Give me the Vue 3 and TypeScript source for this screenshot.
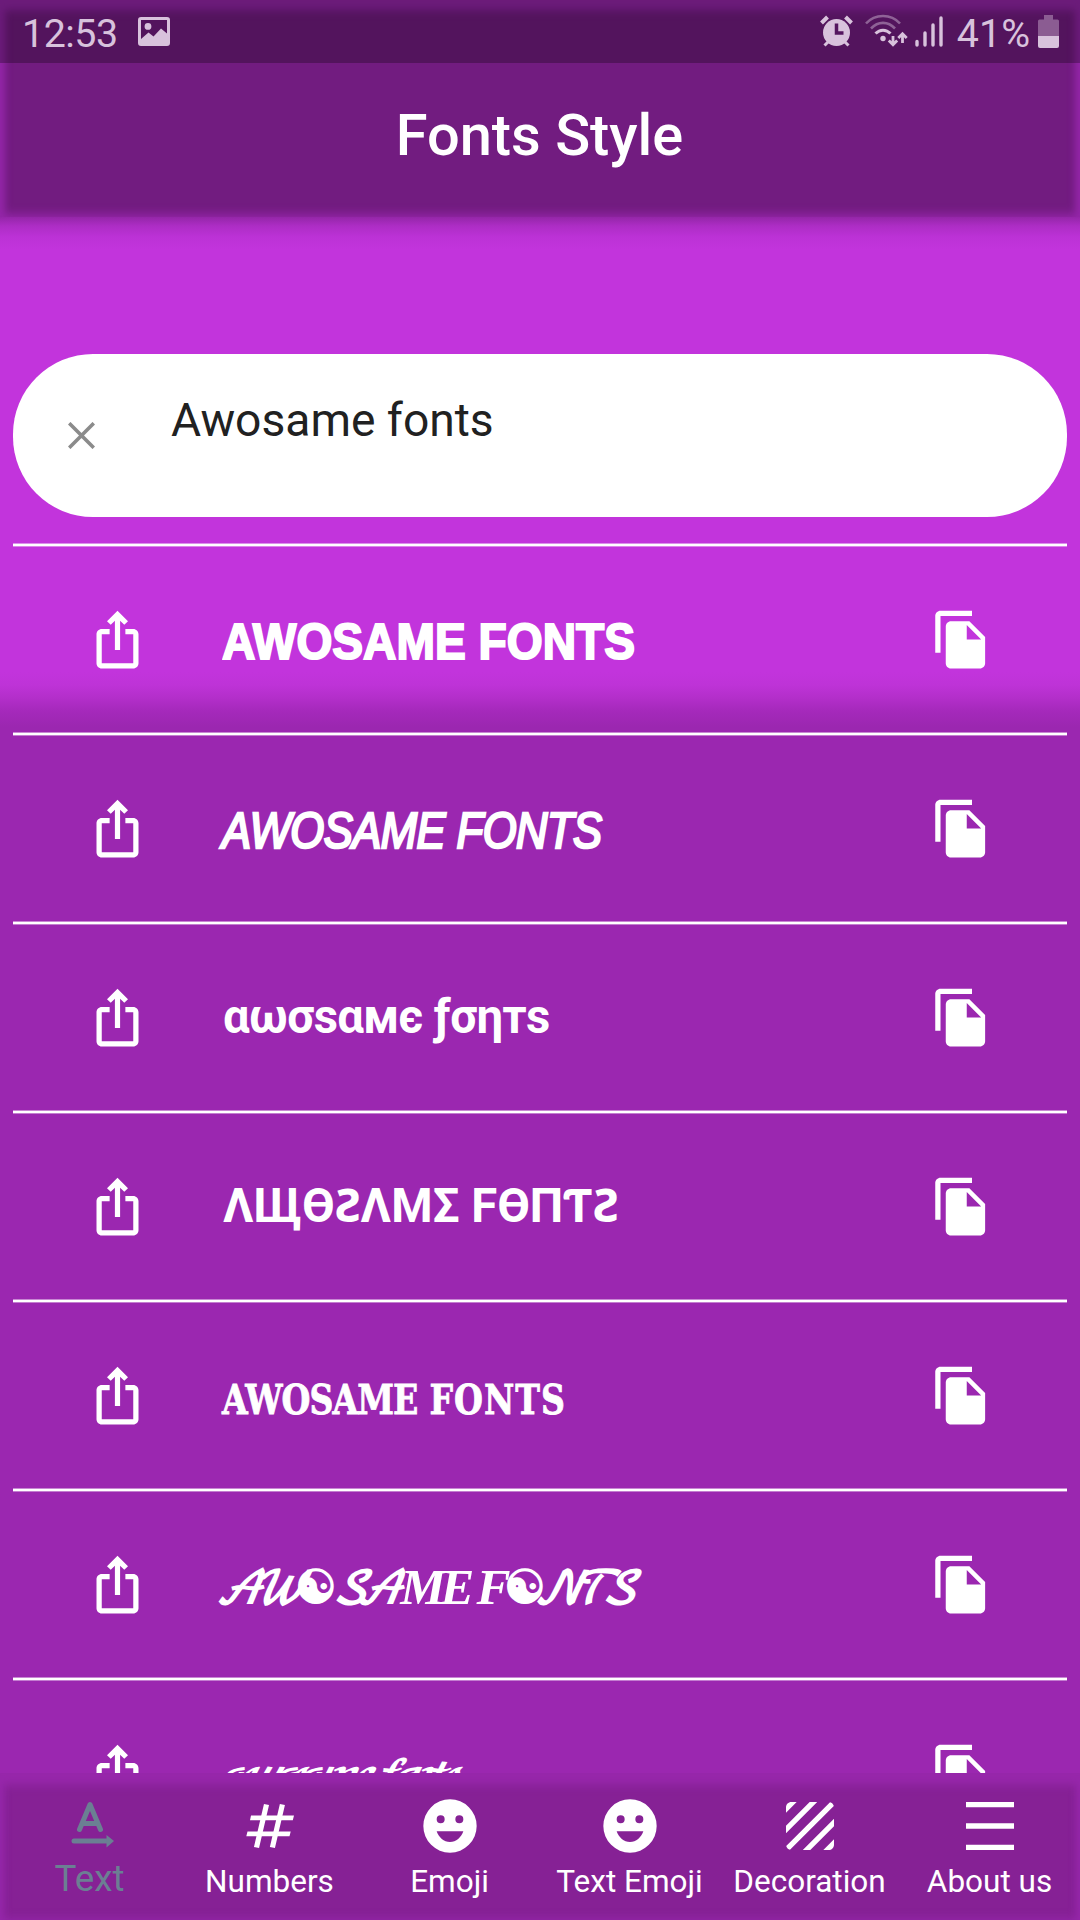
<script setup lang="ts">
interface Part {
  text: string
  kind: string
}
interface Row {
  kind: string
  parts: Part[]
}
interface Tab {
  label: string
  icon: string
}

const plain = (kind: string, text: string): Row => ({ kind, parts: [{ text, kind: 'plain' }] })

const rows: Row[] = [
  plain('sans', 'AWOSAME FONTS'),
  plain('slant', 'AWOSAME FONTS'),
  plain('greek', 'αωσѕαмє ƒσηтѕ'),
  plain('cyrillic', 'ΛЩӨƧΛMΣ FӨПƬƧ'),
  {
    kind: 'typewriter',
    parts: [
      { text: 'AWOSAME ', kind: 'tight' },
      { text: 'FONTS', kind: 'loose' },
    ],
  },
  {
    kind: 'script',
    parts: [
      { text: '𝒜𝒲', kind: 'hand' },
      { text: '☯', kind: 'yin' },
      { text: '𝒮𝒜', kind: 'hand' },
      { text: 'ME F', kind: 'roman' },
      { text: '☯', kind: 'yin' },
      { text: '𝒩𝒯𝒮', kind: 'hand tail' },
    ],
  },
  plain('lower', '𝓪𝔀𝓸𝓼𝓪𝓶𝓮 𝓯𝓸𝓷𝓽𝓼'),
]

const tabs: Tab[] = [
  { label: 'Text', icon: 'text' },
  { label: 'Numbers', icon: 'hash' },
  { label: 'Emoji', icon: 'emoji' },
  { label: 'Text Emoji', icon: 'emoji' },
  { label: 'Decoration', icon: 'texture' },
  { label: 'About us', icon: 'menu' },
]
</script>

<template>
  <div class="screen">
    <header class="top">
      <div class="status">
        <span class="clock">12:53</span>
        <svg class="picture" width="32" height="29" viewBox="0 0 32 29">
          <path fill-rule="evenodd" d="M3 0h26a3 3 0 0 1 3 3v23a3 3 0 0 1-3 3H3a3 3 0 0 1-3-3V3a3 3 0 0 1 3-3zM3 3v19l7.500-6.500 5 4 7.500-8 6 5V3zM10 6a3.400 3.400 0 1 1 0 6.800 3.400 3.400 0 0 1 0-6.800z" />
        </svg>
        <span class="grow"></span>
        <svg class="alarm" width="33" height="32" viewBox="0 0 33 32">
          <circle cx="16.500" cy="17.500" r="13.500" />
          <path d="M1.500 8l6-6M31.500 8l-6-6" stroke="currentColor" stroke-width="4" />
          <path d="M4.500 30.500l5-5M28.500 30.500l-5-5" stroke="currentColor" stroke-width="3" />
          <path class="hands" d="M16.500 8.500v9.500h7" />
        </svg>
        <svg class="wifi" width="43" height="33" viewBox="0 0 43 33">
          <g fill="none" stroke="currentColor" stroke-width="2.600">
            <path opacity=".45" d="M1 9.500C10-.5 26-.5 35 9.500" />
            <path opacity=".45" d="M6 14.500c7-7.500 17-7.500 24 0" />
            <path stroke-width="3" d="M10.500 19.500c4.500-4.500 10.500-4.500 15 0" />
            <path stroke-width="2.800" d="M28 22v8M23.800 26.500l4.200 4.200 4.200-4.200M37.500 29v-8M33.300 24l4.200-4.200 4.200 4.200" />
          </g>
          <circle cx="18" cy="24.500" r="2.700" />
        </svg>
        <svg class="signal" width="28" height="31" viewBox="0 0 28 31">
          <path stroke="currentColor" stroke-width="3.400" stroke-linecap="round" d="M2 25.500v3.500M10 17v12M18 9v20M26 2v27" />
        </svg>
        <span class="percent">41%</span>
        <svg class="battery" width="21" height="33" viewBox="0 0 21 33">
          <path opacity=".42" d="M6 0h9v4.500h4.500A1.500 1.500 0 0 1 21 6v15H0V6a1.500 1.500 0 0 1 1.500-1.500H6z" />
          <path d="M0 21h21v10a2 2 0 0 1-2 2H2a2 2 0 0 1-2-2z" />
        </svg>
      </div>
      <h1>Fonts Style</h1>
    </header>

    <main>
      <div class="search">
        <svg width="27" height="27" viewBox="0 0 27 27">
          <path d="M1.200 1.200l24.600 24.600M25.800 1.200L1.200 25.800" stroke="#8b8b8b" stroke-width="3.600" />
        </svg>
        <span>Awosame fonts</span>
      </div>
      <ul>
        <li v-for="(row, i) in rows" :key="i">
          <svg class="share" width="63" height="63" viewBox="0 0 24 24">
            <path d="M16 5l-1.420 1.420-1.590-1.590V16h-1.980V4.830L9.420 6.420 8 5l4-4 4 4zm4 5v11c0 1.100-.9 2-2 2H6c-1.110 0-2-.9-2-2V10c0-1.110.89-2 2-2h3v2H6v11h12V10h-3V8h3c1.100 0 2 .89 2 2z" />
          </svg>
          <div class="sample" :class="row.kind">
            <span v-for="(part, j) in row.parts" :key="j" :class="part.kind">{{ part.text }}</span>
          </div>
          <svg class="copy" width="63" height="63" viewBox="0 0 24 24">
            <path d="M16 1H4c-1.100 0-2 .9-2 2v14h2V3h12V1zm-1 4l6 6v10c0 1.100-.9 2-2 2H7.990C6.890 23 6 22.100 6 21l.01-14c0-1.100.89-2 1.990-2h7zm-1 7h5.500L14 6.500V12z" />
          </svg>
        </li>
      </ul>
    </main>

    <nav>
      <div v-for="(tab, i) in tabs" :key="tab.label" class="tab" :class="{ active: i === 0 }">
        <svg v-if="tab.icon === 'text'" width="64" height="64" viewBox="0 0 64 64">
          <g fill="none" stroke="currentColor" stroke-width="5" stroke-linecap="round" stroke-linejoin="round">
            <path d="M21.500 35.500L32 10.500l10.500 25M25 29.500h14" />
            <path d="M16 47H50" />
          </g>
          <path d="M48.500 41l7.500 6-7.500 6.500z" />
        </svg>
        <svg v-else-if="tab.icon === 'hash'" width="64" height="64" viewBox="0 0 64 64">
          <path fill="none" stroke="currentColor" stroke-width="5.200" d="M28.500 10.500l-10 43M44.400 10.500l-10 43" />
          <path d="M13 21.500h43l-1.200 4.800H12zM9.500 37.500h43.200l-1.200 4.800H8.300z" />
        </svg>
        <svg v-else-if="tab.icon === 'emoji'" width="64" height="64" viewBox="0 0 24 24">
          <path fill-rule="evenodd" d="M12 2a10 10 0 1 1 0 20 10 10 0 0 1 0-20zM8.500 8a1.500 1.500 0 1 0 0 3 1.500 1.500 0 0 0 0-3zM15.500 8a1.500 1.500 0 1 0 0 3 1.500 1.500 0 0 0 0-3zM12 18c2.280 0 4.220-1.660 5-4H7c.78 2.340 2.720 4 5 4z" />
        </svg>
        <svg v-else-if="tab.icon === 'texture'" width="64" height="64" viewBox="0 0 24 24">
          <path d="M19.510 3.080L3.080 19.510c.09.34.27.65.51.9.25.24.56.42.9.51L20.930 4.490c-.19-.69-.73-1.230-1.420-1.410zM11.880 3L3 11.880v2.830L14.710 3h-2.830zM5 3c-1.100 0-2 .9-2 2v2l4-4H5zm14 18c.55 0 1.050-.22 1.410-.59.37-.36.59-.86.59-1.410v-2l-4 4h2zm-9.710 0h2.830L21 12.120V9.290L9.290 21z" />
        </svg>
        <svg v-else width="64" height="64" viewBox="0 0 24 24">
          <path d="M3 3h18v2H3zM3 11h18v2H3zM3 19h18v2H3z" />
        </svg>
        <span>{{ tab.label }}</span>
      </div>
    </nav>
  </div>
</template>

<style>
body {
  margin: 0;
}
</style>

<style scoped>
.screen {
  width: 1080px;
  height: 1920px;
  overflow: hidden;
  display: flex;
  flex-direction: column;
  font-family: Roboto, "Noto Sans", sans-serif;
  color: #fff;
  background: #9b27b0;
}
svg {
  display: block;
  flex: none;
  fill: currentColor;
}
.top {
  height: 217px;
  flex: none;
  background: #721c80;
  box-shadow: inset 0 8px 10px 2px #9426a8, inset 0 0 10px 3px #9426a8;
}
.status {
  height: 63px;
  box-sizing: border-box;
  background: rgba(0, 0, 0, 0.27);
  display: flex;
  align-items: flex-start;
  padding: 0 21px 0 22px;
  color: #d8c2dc;
  font-size: 39.400px;
  line-height: 67px;
}
.clock {
  letter-spacing: -0.500px;
}
.picture {
  margin: 17px 0 0 20px;
}
.grow {
  flex: 1;
}
.alarm {
  margin-top: 15px;
}
.hands {
  fill: none;
  stroke: #54165f;
  stroke-width: 3.500;
}
.wifi {
  margin: 14px 0 0 12px;
}
.signal {
  margin: 16px 0 0 7px;
}
.percent {
  margin-left: 14px;
}
.battery {
  margin: 15px 0 0 8px;
}
h1 {
  margin: 0;
  padding-right: 1px;
  font-size: 57.750px;
  font-weight: 500;
  line-height: 145px;
  text-align: center;
}
main {
  flex: 1;
  min-height: 0;
  overflow: hidden;
  padding: 137px 13px 0;
  background: linear-gradient(
    #9426a8 0,
    #ad2dc5 9px,
    #bc32d6 20px,
    #c234dc 32px,
    #c234dc 455px,
    #be33d7 468px,
    #b42fcb 480px,
    #a529bb 494px,
    #9b27b0 510px
  );
}
.search {
  height: 163px;
  border-radius: 80px;
  background: #fff;
  display: flex;
  align-items: center;
  padding-left: 55px;
  color: #212121;
}
.search span {
  margin: -32px 0 0 76px;
  font-size: 46.200px;
}
ul {
  list-style: none;
  margin: 26px 0 0;
  padding: 0;
}
li {
  height: 189px;
  box-sizing: border-box;
  display: flex;
  align-items: center;
  padding: 3px 74px 0 73px;
  background: linear-gradient(
    rgba(255, 255, 255, 0.45) 0 1px,
    #fff 1px 3px,
    rgba(255, 255, 255, 0.4) 3px 4px,
    transparent 4px
  );
}
.sample {
  flex: 1;
  height: 56px;
  margin-left: 73px;
  display: flex;
  white-space: pre;
  font-size: 47.250px;
  font-weight: 700;
  line-height: 56px;
  transform-origin: left center;
}
.sans {
  font-family: "Liberation Sans", sans-serif;
  font-size: 49.500px;
  line-height: 61px;
  transform: scaleX(0.933);
  -webkit-text-stroke: 2px #fff;
}
.slant {
  font-family: "Liberation Sans", sans-serif;
  font-size: 49.500px;
  font-style: italic;
  font-weight: 400;
  line-height: 61px;
  letter-spacing: -0.600px;
  transform: scaleX(0.88);
  -webkit-text-stroke: 2.500px #fff;
}
.greek {
  margin-left: 74px;
  letter-spacing: -0.600px;
}
.cyrillic {
  margin-left: 74px;
  letter-spacing: 0.050px;
}
.typewriter {
  font-family: "DejaVu Serif", serif;
  font-size: 41px;
  line-height: 67px;
  transform: scaleX(0.81);
  -webkit-text-stroke: 0.800px #fff;
}
.tight {
  letter-spacing: -1.200px;
  word-spacing: 2px;
}
.loose {
  letter-spacing: 1.200px;
}
.script,
.lower {
  font-family: "DejaVu Math TeX Gyre", "DejaVu Serif", "DejaVu Sans", serif;
  font-weight: 400;
}
.script {
  margin-left: 67px;
  line-height: 68px;
}
.lower {
  margin-left: 69px;
  line-height: 61px;
}
.hand {
  font-size: 44px;
  font-style: italic;
  letter-spacing: -11px;
  -webkit-text-stroke: 2px #fff;
}
.tail {
  margin-left: -8px;
  letter-spacing: -13px;
}
.yin {
  margin-left: -1px;
  font-size: 46px;
  letter-spacing: -3px;
  -webkit-text-stroke: 2px #fff;
}
.roman {
  margin-left: 8px;
  font-family: "Liberation Serif", serif;
  font-size: 51px;
  font-style: italic;
  font-weight: 700;
  line-height: 63px;
  letter-spacing: -5.300px;
}
.lower {
  font-size: 34px;
  font-style: italic;
  letter-spacing: -12.300px;
  word-spacing: 2px;
}
nav {
  height: 147px;
  flex: none;
  display: flex;
  background: #862195;
  box-shadow: inset 0 10px 10px 2px #9727ab, inset 0 0 8px 2px #9326a7;
}
.tab {
  width: 180px;
  display: flex;
  flex-direction: column;
  align-items: center;
  padding-top: 21px;
  font-size: 31.500px;
}
.tab span {
  line-height: 37px;
  margin: 5px 1px 0 0;
  white-space: nowrap;
}
.tab.active span {
  font-size: 36.750px;
  margin-top: 2px;
}
.active {
  color: #6b7f93;
}
</style>
